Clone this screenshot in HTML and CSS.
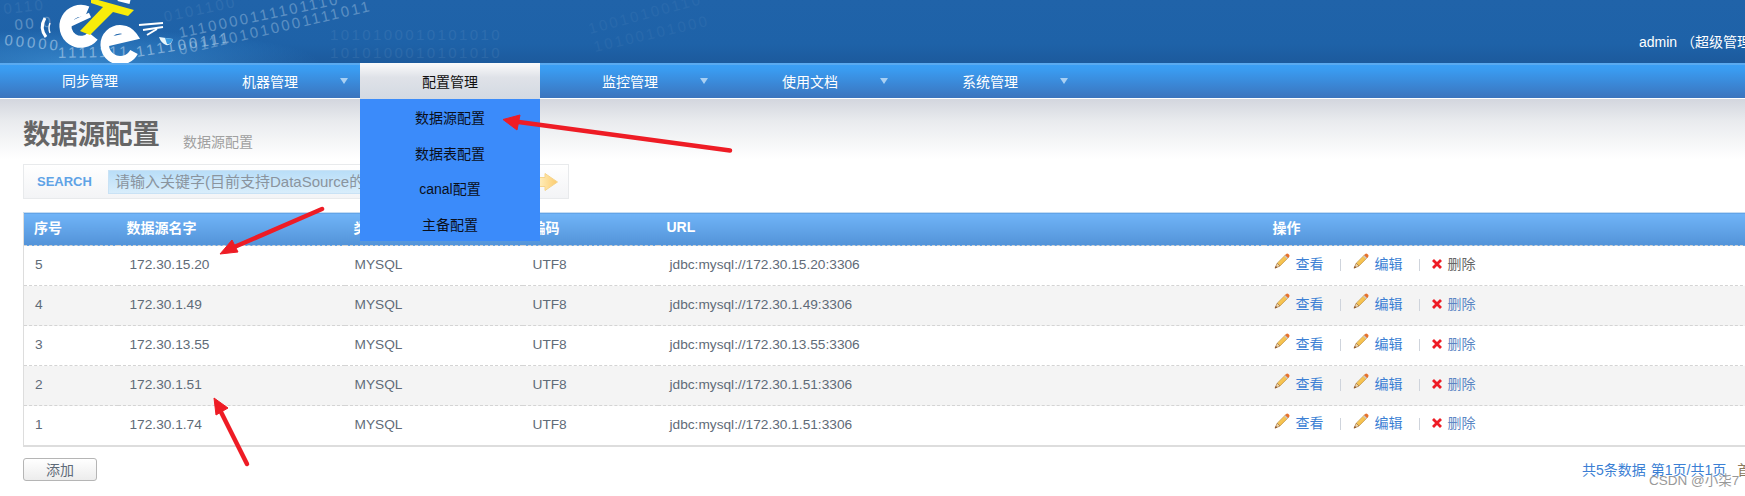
FILE: index.html
```html
<!DOCTYPE html>
<html lang="zh">
<head>
<meta charset="utf-8">
<title>数据源配置</title>
<link rel="stylesheet" href="styles.css">
</head>
<body>
<svg class="defs" width="0" height="0" aria-hidden="true">
  <defs>
    <linearGradient id="pencilBody" x1="0" y1="0" x2="1" y2="1">
      <stop offset="0" stop-color="#ffe27a"/><stop offset="1" stop-color="#eda52a"/>
    </linearGradient>
    <linearGradient id="goFill" x1="0" y1="0" x2="1" y2="0">
      <stop offset="0" stop-color="#fff0c0"/><stop offset="1" stop-color="#fccb6c"/>
    </linearGradient>
    <symbol id="pencil" viewBox="0 0 16 16">
      <path d="M3.2 10.2 L11.6 1.8 L14.4 4.6 L6 13 Z" fill="url(#pencilBody)" stroke="#b98a3a" stroke-width=".6"/>
      <path d="M10.8 2.6 L12.6 .8 Q13.4 .3 14.4 1.1 L15.3 2 Q15.8 2.9 15.2 3.8 L13.6 5.4 Z" fill="#e8702a"/>
      <path d="M10.2 3.2 L13 6 L14 5 L11.2 2.2 Z" fill="#c9c9c9"/>
      <path d="M3.2 10.2 L6 13 L1 15.2 Z" fill="#f0d9b0" stroke="#a5713a" stroke-width=".7"/>
      <path d="M1.9 13 L3.2 14.3 L1 15.2 Z" fill="#7a3f16"/>
    </symbol>
    <symbol id="cross" viewBox="0 0 10 10">
      <path d="M1 1 L9 9 M9 1 L1 9" stroke="#ee1c25" stroke-width="2.8" stroke-linecap="butt" fill="none"/>
    </symbol>
  </defs>
</svg>

<div class="page">
  <header class="top">
    <svg class="digits" width="760" height="63" viewBox="0 0 760 63" aria-hidden="true">
      <text x="4" y="45" transform="rotate(6 4 45)" class="bright big">00000</text>
      <text x="58" y="58" transform="rotate(-1 58 58)" class="bright big">1111111</text>
      <text x="137" y="57" transform="rotate(-9 137 57)" class="bright big">111100111</text>
      <text x="180" y="38" transform="rotate(-12 180 38)" class="mid">1110000111101110</text>
      <text x="180" y="55" transform="rotate(-13 180 55)" class="mid">0011101010001111011</text>
      <text x="330" y="40" class="faint">1010100010101010</text>
      <text x="330" y="58" class="faint">1010100010101010</text>
      <text x="590" y="34" transform="rotate(-15 590 34)" class="fainter">10010100110</text>
      <text x="595" y="52" transform="rotate(-13 595 52)" class="fainter">10100101000</text>
      <text x="4" y="14" transform="rotate(-6 4 14)" class="faint">0110</text>
      <text x="15" y="30" transform="rotate(-5 15 30)" class="mid">00 0</text>
      <text x="165" y="22" transform="rotate(-12 165 22)" class="faint">0101100</text>
    </svg>
    <svg class="logo" width="180" height="63" viewBox="0 0 180 63" aria-hidden="true">
      <g fill="none" stroke="#fff">
        <path d="M45 18 Q39 28 46 37" stroke-width="3"/>
        <path d="M50 23 Q48 28 50 33" stroke-width="1.4"/>
        <path d="M93 36 A15.5 15.5 0 1 1 87 12" stroke-width="12"/>
        <path d="M62 28 L90 15" stroke-width="5"/>
        <path d="M134 52 A15.5 15.5 0 1 1 133 36 L107 42" stroke-width="8.5"/>
        <path d="M139 25 L163 23" stroke-width="2.2"/>
        <path d="M143 30 L163 27" stroke-width="2"/>
        <path d="M147 35 L157 29" stroke-width="2"/>
        <path d="M118 -1 L130 2" stroke-width="4"/>
      </g>
      <path d="M91 -2 L134 10 L128 16 L113 12 L90 35 L80 31 L103 7 L91 3 Z" fill="#f8ec0a"/>
      <path d="M159 37 L173 39 Q171 46 166 45 Q161 43 159 37 Z" fill="#e8f6fb"/>
      <path d="M165 38 L173 39 Q171 45 167 44 Z" fill="#3a9be0"/>
    </svg>
    <div class="user">admin （超级管理员）</div>
  </header>

  <nav class="nav">
    <div class="nav-item">同步管理</div>
    <div class="nav-item has-sub">机器管理<span class="caret"></span></div>
    <div class="nav-item active">配置管理
      <ul class="submenu">
        <li>数据源配置</li>
        <li>数据表配置</li>
        <li>canal配置</li>
        <li>主备配置</li>
      </ul>
    </div>
    <div class="nav-item has-sub">监控管理<span class="caret"></span></div>
    <div class="nav-item has-sub">使用文档<span class="caret"></span></div>
    <div class="nav-item has-sub">系统管理<span class="caret"></span></div>
  </nav>

  <main class="main">
    <div class="title-row">
      <h1>数据源配置</h1>
      <span class="subtitle">数据源配置</span>
    </div>

    <div class="search">
      <span class="search-label">SEARCH</span>
      <div class="search-input">请输入关键字(目前支持DataSource的名字、IP)</div>
      <svg class="search-go" width="20" height="18" viewBox="0 0 20 18" aria-hidden="true">
        <path d="M0 4.5 H7 V.5 L19.5 9 L7 17.5 V13.5 H0 Z" fill="url(#goFill)" stroke="#f5d48c" stroke-width="1"/>
      </svg>
    </div>

    <table class="grid">
      <colgroup>
        <col class="c1"><col class="c2"><col class="c3"><col class="c4"><col class="c5"><col class="c6">
      </colgroup>
      <thead>
        <tr><th>序号</th><th>数据源名字</th><th>类型</th><th>编码</th><th>URL</th><th>操作</th></tr>
      </thead>
      <tbody>
        <tr>
          <td>5</td><td>172.30.15.20</td><td>MYSQL</td><td>UTF8</td><td>jdbc:mysql://172.30.15.20:3306</td>
          <td><div class="ops">
            <a class="op"><svg class="ico-pen"><use href="#pencil"/></svg>查看</a><i class="sep"></i>
            <a class="op"><svg class="ico-pen"><use href="#pencil"/></svg>编辑</a><i class="sep"></i>
            <a class="op del first"><svg class="ico-x"><use href="#cross"/></svg>删除</a>
          </div></td>
        </tr>
        <tr>
          <td>4</td><td>172.30.1.49</td><td>MYSQL</td><td>UTF8</td><td>jdbc:mysql://172.30.1.49:3306</td>
          <td><div class="ops">
            <a class="op"><svg class="ico-pen"><use href="#pencil"/></svg>查看</a><i class="sep"></i>
            <a class="op"><svg class="ico-pen"><use href="#pencil"/></svg>编辑</a><i class="sep"></i>
            <a class="op del"><svg class="ico-x"><use href="#cross"/></svg>删除</a>
          </div></td>
        </tr>
        <tr>
          <td>3</td><td>172.30.13.55</td><td>MYSQL</td><td>UTF8</td><td>jdbc:mysql://172.30.13.55:3306</td>
          <td><div class="ops">
            <a class="op"><svg class="ico-pen"><use href="#pencil"/></svg>查看</a><i class="sep"></i>
            <a class="op"><svg class="ico-pen"><use href="#pencil"/></svg>编辑</a><i class="sep"></i>
            <a class="op del"><svg class="ico-x"><use href="#cross"/></svg>删除</a>
          </div></td>
        </tr>
        <tr>
          <td>2</td><td>172.30.1.51</td><td>MYSQL</td><td>UTF8</td><td>jdbc:mysql://172.30.1.51:3306</td>
          <td><div class="ops">
            <a class="op"><svg class="ico-pen"><use href="#pencil"/></svg>查看</a><i class="sep"></i>
            <a class="op"><svg class="ico-pen"><use href="#pencil"/></svg>编辑</a><i class="sep"></i>
            <a class="op del"><svg class="ico-x"><use href="#cross"/></svg>删除</a>
          </div></td>
        </tr>
        <tr>
          <td>1</td><td>172.30.1.74</td><td>MYSQL</td><td>UTF8</td><td>jdbc:mysql://172.30.1.51:3306</td>
          <td><div class="ops">
            <a class="op"><svg class="ico-pen"><use href="#pencil"/></svg>查看</a><i class="sep"></i>
            <a class="op"><svg class="ico-pen"><use href="#pencil"/></svg>编辑</a><i class="sep"></i>
            <a class="op del"><svg class="ico-x"><use href="#cross"/></svg>删除</a>
          </div></td>
        </tr>
      </tbody>
    </table>

    <div class="foot">
      <button class="btn" type="button">添加</button>
      <div class="pager"><span>共5条数据</span><span>第1页/共1页</span><span class="pg-first">首页</span></div>
    </div>
  </main>

  <svg class="arrows" width="1745" height="496" viewBox="0 0 1745 496" aria-hidden="true">
    <g fill="#ee1c25" stroke="#ee1c25">
      <path d="M730 150.5 L515 121.5" stroke-width="4.5" stroke-linecap="round" fill="none"/>
      <path d="M503 119.5 L520 115 L517 130 Z" stroke-width="1"/>
      <path d="M322 209 L232 248" stroke-width="4.5" stroke-linecap="round" fill="none"/>
      <path d="M220 254 L232 240 L238 252 Z" stroke-width="1"/>
      <path d="M247 464 L220 410" stroke-width="4.5" stroke-linecap="round" fill="none"/>
      <path d="M214 398 L228 408 L216 415 Z" stroke-width="1"/>
    </g>
  </svg>
  <div class="watermark">CSDN @小柒7</div>
</div>
</body>
</html>
```
FILE: styles.css
```css
* { box-sizing: border-box; }
html, body { margin: 0; padding: 0; }
body {
  font-family: "Liberation Sans", "Noto Sans CJK SC", sans-serif;
  font-size: 14px;
  color: #5f6b78;
  background: #fff;
}
.defs { position: absolute; }
.page {
  position: relative;
  width: 1745px;
  height: 496px;
  overflow: hidden;
}

/* header */
.top {
  position: relative;
  height: 63px;
  display: flex;
  align-items: flex-start;
  background:
    radial-gradient(ellipse 240px 34px at 80px 63px, rgba(70, 160, 230, .6), rgba(70, 160, 230, 0)),
    linear-gradient(#2063a9, #1e62a8 70%, #1c5a9d);
  overflow: hidden;
}
.digits { position: absolute; left: 0; top: 0; }
.digits text {
  font-family: "Liberation Sans", sans-serif;
  font-size: 15px;
  letter-spacing: 2.4px;
  fill: #cfe4f6;
}
.digits .big { font-size: 15px; letter-spacing: 3px; }
.bright { opacity: .5; }
.mid { opacity: .34; }
.faint { opacity: .08; }
.fainter { opacity: .05; }
.logo { position: absolute; left: 0; top: 0; }
.user {
  margin: 33px 0 0 1639px;
  color: #fff;
  font-size: 14px;
  line-height: 18px;
  white-space: nowrap;
  flex: none;
}

/* nav */
.nav {
  position: relative;
  z-index: 5;
  height: 36px;
  display: flex;
  background: linear-gradient(#3b9ff5 0, #3a9bf0 15%, #3b74bd 100%);
  border-top: 2px solid #5aaaf0;
  border-bottom: 1px solid #fff;
}
.nav-item {
  position: relative;
  width: 180px;
  height: 33px;
  text-align: center;
  line-height: 33px;
  color: #fff;
  font-size: 14px;
}
.nav-item:nth-child(n+2) { line-height: 35px; }
.caret {
  position: absolute;
  right: 12px;
  top: 13px;
  border-left: 4px solid transparent;
  border-right: 4px solid transparent;
  border-top: 6px solid #a9d0f3;
}
.active {
  height: 36px;
  margin-top: -2px;
  padding-top: 2px;
  color: #111;
  background: linear-gradient(#fbfbfc, #dfe2e8 40%, #d3d9e2);
}
.submenu {
  position: absolute;
  left: 0;
  top: 36px;
  width: 180px;
  margin: 0;
  padding: 0;
  list-style: none;
  background: #3b8bfa;
  color: #0a0f1a;
}
.submenu li {
  height: 35.5px;
  line-height: 39px;
  font-size: 14px;
}

/* main */
.main {
  background: linear-gradient(#d3d6de, #e9ebee 22px, #fff 60px);
  padding: 0 0 0 23px;
  height: 397px;
}
.title-row {
  display: flex;
  align-items: flex-end;
  height: 65px;
  padding-bottom: 11px;
}
.title-row h1 {
  margin: 0;
  font-size: 27.4px;
  line-height: 36px;
  font-weight: 700;
  color: #666;
}
.subtitle {
  margin: 0 0 1px 23px;
  font-size: 14px;
  line-height: 20px;
  color: #a0a0a0;
}
.search {
  display: flex;
  align-items: center;
  width: 546px;
  height: 35px;
  border: 1px solid #e8eaec;
  background: linear-gradient(#fff, #f3f4f6);
}
.search-label {
  width: 84px;
  padding-left: 13px;
  flex: none;
  font-weight: 700;
  font-size: 13px;
  color: #5fa3e6;
}
.search-input {
  width: 430px;
  height: 24px;
  flex: none;
  padding-left: 6px;
  line-height: 21px;
  font-size: 15px;
  color: #8a949e;
  white-space: nowrap;
  overflow: hidden;
  background: linear-gradient(#b9def8, #d8edfb);
  border: 1px solid #c9e2f5;
}
.search-go { flex: none; }

/* table */
.grid {
  margin-top: 13px;
  width: 1760px;
  table-layout: fixed;
  border-collapse: collapse;
  border-left: 1px solid #ddd;
  border-bottom: 2px solid #ddd;
}
.c1 { width: 94px; }
.c2 { width: 227px; }
.c3 { width: 178px; }
.c4 { width: 135px; }
.c5 { width: 606px; }
.grid th {
  height: 33px;
  padding: 0 0 4px 9px;
  text-align: left;
  font-size: 14px;
  font-weight: 700;
  color: #fff;
  background: linear-gradient(#70b4f8, #5393d8);
  border-top: 1px solid #c5dcf2;
}
.grid th:first-child { padding-left: 10px; }
.grid td {
  height: 40px;
  padding: 0 0 2px 11px;
  font-size: 13.7px;
  color: #5f6b78;
  border-top: 1px dashed #d4d4d4;
  white-space: nowrap;
}
.grid td:nth-child(2), .grid td:nth-child(5) { padding-left: 12px; }
.grid td:nth-child(6) { padding-left: 10px; }
.grid td:nth-child(3), .grid td:nth-child(4) { padding-left: 10px; }
.grid tbody tr:nth-child(even) td { background: #f4f4f4; }

.ops { display: flex; align-items: center; margin-top: -4px; }
.op {
  display: flex;
  align-items: center;
  color: #3b7fd4;
  font-size: 14px;
}
.ico-pen { width: 16px; height: 16px; margin-right: 6px; margin-top: -3px; flex: none; }
.ico-x { width: 10px; height: 10px; margin-right: 6px; margin-top: 2px; flex: none; }
.sep {
  width: 1px;
  height: 12px;
  margin: 4px 12px 0 16px;
  background: #cfd4dc;
}
.del { color: #5b86c4; }
.del.first { color: #666; }

/* footer */
.foot {
  display: flex;
  justify-content: space-between;
  align-items: center;
  margin-top: 11px;
  width: 1760px;
}
.btn {
  width: 74px;
  height: 23px;
  padding: 0;
  border: 1px solid #b5b5b5;
  border-radius: 3px;
  background: linear-gradient(#fff, #ececec);
  color: #5f6b78;
  font: 14px "Liberation Sans", "Noto Sans CJK SC", sans-serif;
}
.pager {
  display: flex;
  gap: 5px;
  width: 201px;
  flex: none;
  font-size: 14px;
  color: #3b7fd4;
  white-space: nowrap;
}
.pg-first { color: #8a7a60; margin-left: 6px; }

/* overlays */
.arrows { position: absolute; left: 0; top: 0; z-index: 10; pointer-events: none; }
.watermark {
  position: absolute;
  left: 1649px;
  top: 472px;
  z-index: 11;
  color: #999;
  font-size: 13.5px;
  line-height: 18px;
  white-space: nowrap;
}
```
